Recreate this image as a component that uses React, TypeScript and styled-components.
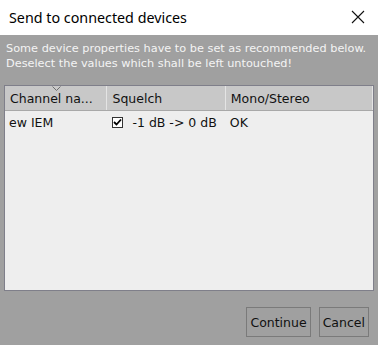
import styled, { createGlobalStyle } from 'styled-components'

const GlobalStyle = createGlobalStyle`
  html, body {
    margin: 0;
    padding: 0;
    background: #a0a0a0;
  }
`

const columns = [
  { title: 'Channel na...', width: 103, sorted: true },
  { title: 'Squelch', width: 119, sorted: false },
  { title: 'Mono/Stereo', width: 148, sorted: false },
]

const rows = [{ id: '1', name: 'ew IEM', squelch: '-1 dB -> 0 dB', checked: true, mono: 'OK' }]

export default function App() {
  return (
    <>
      <GlobalStyle />
      <Dialog>
        <TitleBar>
          <Title>Send to connected devices</Title>
          <CloseButton>
            <svg width="14" height="14" viewBox="0 0 14 14">
              <path d="M1 1 L13 13 M13 1 L1 13" stroke="#111" strokeWidth="1.1" />
            </svg>
          </CloseButton>
        </TitleBar>
        <Body>
          <Message>
            Some device properties have to be set as recommended below.
            <br />
            Deselect the values which shall be left untouched!
          </Message>
          <ListView>
            <HeaderRow>
              {columns.map((col) => (
                <HeaderCell key={col.title} $width={col.width}>
                  {col.sorted && (
                    <SortCaret width="9" height="5" viewBox="0 0 9 5">
                      <path d="M0.5 0.5 L4.5 4.5 L8.5 0.5" stroke="#6d6d6d" fill="none" />
                    </SortCaret>
                  )}
                  {col.title}
                </HeaderCell>
              ))}
            </HeaderRow>
            {rows.map((row) => (
              <Row key={row.id}>
                <Cell $width={103}>{row.name}</Cell>
                <Cell $width={119}>
                  <CheckBox>
                    {row.checked && (
                      <svg width="9" height="9" viewBox="0 0 9 9">
                        <path d="M1 4 L3.5 6.5 L8 1.5" stroke="#000" strokeWidth="1.8" fill="none" />
                      </svg>
                    )}
                  </CheckBox>
                  {row.squelch}
                </Cell>
                <Cell $width={148}>{row.mono}</Cell>
              </Row>
            ))}
          </ListView>
          <Footer>
            <Button>Continue</Button>
            <Button>Cancel</Button>
          </Footer>
        </Body>
      </Dialog>
    </>
  )
}

const Dialog = styled.div`
  width: 378px;
  height: 345px;
  display: flex;
  flex-direction: column;
  background: #a0a0a0;
`

const TitleBar = styled.div`
  height: 35px;
  background: #ffffff;
  display: flex;
  align-items: center;
  justify-content: space-between;
  padding: 0 13px 0 9px;
  box-sizing: border-box;
`

const Title = styled.span`
  font-family: 'Noto Sans', sans-serif;
  font-size: 14.3px;
  color: #000;
  margin-top: -1px;
`

const CloseButton = styled.span`
  display: flex;
  margin-top: -1px;
`

const Body = styled.div`
  flex: 1;
  display: flex;
  flex-direction: column;
  padding: 6px 4px 8px 4px;
`

const Message = styled.div`
  font-family: 'DejaVu Sans', sans-serif;
  font-size: 11.3px;
  line-height: 15px;
  color: #f4f4f4;
  padding-left: 2px;
  height: 44px;
  white-space: nowrap;
`

const ListView = styled.div`
  height: 206px;
  background: #eeeeee;
  border: 1px solid #7f7f8a;
  box-sizing: border-box;
  font-family: 'DejaVu Sans', sans-serif;
  font-size: 12.5px;
`

const HeaderRow = styled.div`
  display: flex;
  height: 25px;
  background: #c8c8c8;
  border-bottom: 1px solid #a8a8a8;
  box-sizing: border-box;
`

const HeaderCell = styled.div<{ $width: number }>`
  position: relative;
  width: ${(p) => p.$width}px;
  display: flex;
  align-items: center;
  padding-left: 5px;
  box-sizing: border-box;
  color: #111;
  border-right: 1px solid #e4e4e4;
  white-space: nowrap;
`

const SortCaret = styled.svg`
  position: absolute;
  top: 0;
  left: 47px;
`

const Row = styled.div`
  display: flex;
  height: 22px;
  align-items: center;
`

const Cell = styled.div<{ $width: number }>`
  width: ${(p) => p.$width}px;
  display: flex;
  align-items: center;
  padding-left: 4px;
  box-sizing: border-box;
  color: #111;
  white-space: nowrap;
`

const CheckBox = styled.span`
  width: 11px;
  height: 11px;
  border: 1px solid #333;
  background: #fff;
  display: inline-flex;
  align-items: center;
  justify-content: center;
  margin: 0 9px 0 1px;
  box-sizing: border-box;
`

const Footer = styled.div`
  margin-top: auto;
  display: flex;
  justify-content: flex-end;
  gap: 8px;
  padding-right: 5px;
`

const Button = styled.button`
  height: 30px;
  padding: 0 3px;
  background: #a0a0a0;
  border: 1px solid #7a7a7a;
  font-family: 'DejaVu Sans', sans-serif;
  font-size: 12.5px;
  color: #111;
`
